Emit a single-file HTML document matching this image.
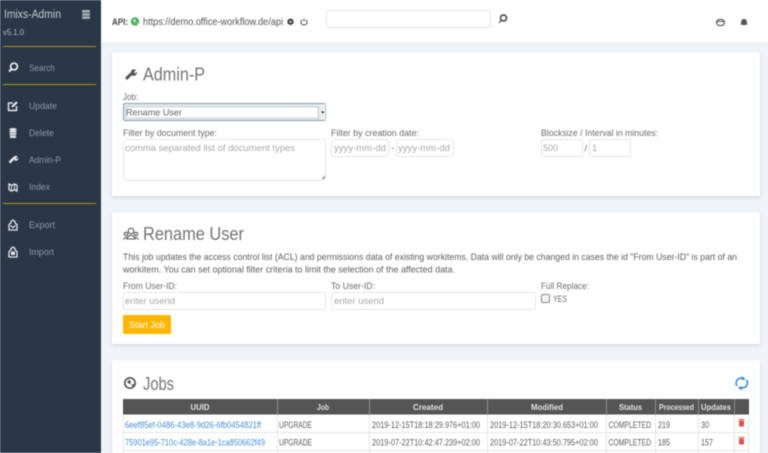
<!DOCTYPE html>
<html><head><meta charset="utf-8"><title>Imixs-Admin</title>
<style>
html,body{margin:0;padding:0;width:768px;height:453px;overflow:hidden;background:#f0f4f8}
svg{display:block;filter:blur(.45px)}
text{font-family:"Liberation Sans","DejaVu Sans",sans-serif;font-size:9.3px;fill:#5e5e5e}
.m{fill:#8f99a4;font-size:9.5px}
.l{fill:#6c6c6c}
.p{fill:#a8a8a8}
.h{fill:#747474;font-size:18.500px}
.th{fill:#e2e2e2;font-weight:bold;font-size:8.600px;text-anchor:middle}
.a{fill:#4a90d0}
.i{fill:#fff;stroke:#e4e6e8;stroke-width:1}
.c{fill:#fff}
.r text{font-size:8.900px}
</style></head><body>
<svg width="768" height="453" viewBox="0 0 768 453" xmlns="http://www.w3.org/2000/svg">
<defs><filter id="s" x="-5%" y="-5%" width="110%" height="115%"><feDropShadow dx="0" dy="1.500" stdDeviation="2" flood-color="#8a98a8" flood-opacity=".3"/></filter></defs>
<rect width="768" height="453" fill="#f0f4f8"/>
<!-- header -->
<rect x="101" width="667" height="43" fill="#fff"/><rect x="101" y="43" width="667" height="1" fill="#e2e7ec"/>
<!-- sidebar -->
<rect width="101" height="453" fill="#2a3747"/>
<text x="4" y="18" textLength="57" lengthAdjust="spacingAndGlyphs" style="font-size:11.500px;fill:#c6cbd1">Imixs-Admin</text>
<g fill="#aab1b9"><rect x="82" y="10" width="8" height="2.500" rx=".8"/><rect x="82" y="13.200" width="8" height="2.500" rx=".8"/><rect x="82" y="16.400" width="8" height="2.500" rx=".8"/></g>
<text x="3" y="35" textLength="21" lengthAdjust="spacingAndGlyphs" style="font-size:8.600px;fill:#b3bac2">v5.1.0</text>
<rect x="3" y="46" width="93" height="1" fill="#b8920f"/><rect x="3" y="84" width="93" height="1" fill="#b8920f"/><rect x="3" y="203" width="93" height="1" fill="#b8920f"/>
<text class="m" x="29" y="71" textLength="26" lengthAdjust="spacingAndGlyphs">Search</text>
<text class="m" x="29" y="109" textLength="28" lengthAdjust="spacingAndGlyphs">Update</text>
<text class="m" x="29" y="136" textLength="25" lengthAdjust="spacingAndGlyphs">Delete</text>
<text class="m" x="29" y="163" textLength="32" lengthAdjust="spacingAndGlyphs">Admin-P</text>
<text class="m" x="29" y="190" textLength="21" lengthAdjust="spacingAndGlyphs">Index</text>
<text class="m" x="29" y="228" textLength="26" lengthAdjust="spacingAndGlyphs">Export</text>
<text class="m" x="29" y="255" textLength="25" lengthAdjust="spacingAndGlyphs">Import</text>
<!-- sidebar icons -->
<g fill="none" stroke="#e4e7ea" stroke-width="1.500">
<circle cx="14" cy="66.500" r="3.400" stroke-width="1.800"/><path d="M11.500 69L9 71.500" stroke-width="2.200"/>
<path d="M16.500 106v4.500H8.500V103H13" stroke-width="1.400"/><path d="M12 107l5-5" stroke-width="2.200"/>
<path d="M9.500 131h7l-.6 7h-5.800z" fill="#e4e7ea" stroke="none"/><ellipse cx="13" cy="129.500" rx="3.800" ry="1.500" fill="#e4e7ea" stroke="none"/><path d="M10 133h6M10 135.500h6" stroke="#2a3747" stroke-width=".6"/>
<path d="M9.500 162.500l5-5" stroke-width="2.600"/><path d="M14 156.500a2.700 2.700 0 0 1 3.700 0l-1.700 1.500 1 1 1.600-1.300a3 3 0 0 1-3.800 3z" fill="#e4e7ea" stroke="none"/>
<path d="M9 184l2.500 1.300 3-1.300 2.500 1.300v5.700l-2.500-1.300-3 1.300L9 189.700z" stroke-width="1.300"/><path d="M11.500 185.500v5M14.500 184.500v5" stroke-width="1"/>
<path d="M9 230v-5.500l2-1.500v-1.500l2-1.500 2 1.500v1.500l2 1.500v5.500z" stroke-width="1.300"/><path d="M10.500 225.500l2.500 2 2.500-2" stroke-width="1.300"/>
<path d="M9 257v-5.500l2-1.500v-1.500l2-1.500 2 1.500v1.500l2 1.500v5.500z" stroke-width="1.300"/><rect x="11" y="251.500" width="4" height="3.500" fill="#e4e7ea" stroke="none"/>
</g>
<!-- top bar -->
<text x="112" y="25" textLength="16" lengthAdjust="spacingAndGlyphs" style="font-weight:bold;fill:#444">API:</text>
<circle cx="135" cy="21.500" r="4.200" fill="#4caf62"/><path d="M133 20l2-1 1 2-1.500 2zM136.500 23l1.500-1v2z" fill="#cfeed6"/>
<text x="143" y="25" textLength="140" lengthAdjust="spacingAndGlyphs" style="fill:#555;font-size:9.800px">https://demo.office-workflow.de/api</text>
<path d="M287.500 20l3-1.800 3 1.800v3.500l-3 1.800-3-1.800z" fill="#444"/><circle cx="290.500" cy="21.700" r="1" fill="#fff"/>
<path d="M302 19.800a3 3 0 1 0 4 0" fill="none" stroke="#555" stroke-width="1"/><path d="M304 18.500v3" stroke="#555" stroke-width="1"/>
<rect x="326.500" y="10.500" width="164" height="17" rx="2" class="i"/>
<circle cx="503.500" cy="18" r="3" fill="none" stroke="#555" stroke-width="1.700"/><path d="M501 20.500l-2 2.500" stroke="#777" stroke-width="1.600"/>
<ellipse cx="720.500" cy="22.500" rx="4" ry="3.200" fill="none" stroke="#555" stroke-width="1.200"/><path d="M716.500 21.500h8" stroke="#555"/>
<rect x="741" y="20.500" width="6" height="4.500" rx="1" fill="#555"/><rect x="742" y="19" width="4" height="2" fill="#666"/>
<!-- card 1 -->
<rect x="112" y="52" width="648" height="144" rx="2" class="c" filter="url(#s)"/>
<path d="M126 79l6-6" stroke="#555" stroke-width="3" fill="none"/><path d="M131 71a3.500 3.500 0 0 1 5-1l-2 2 1 1.500 2-1.500a3.500 3.500 0 0 1-5 3.500z" fill="#555"/>
<text class="h" x="143" y="80.500" textLength="62" lengthAdjust="spacingAndGlyphs">Admin-P</text>
<text class="l" x="123" y="100" textLength="15" lengthAdjust="spacingAndGlyphs">Job:</text>
<rect x="123.500" y="103.500" width="202" height="17" rx="1.500" fill="#dfe6ec" stroke="#8aa0b0"/>
<rect x="126" y="107" width="192" height="11" fill="#fff" stroke="#b6c2cc" stroke-width=".6"/>
<rect x="320" y="104" width="5.500" height="16" fill="#eee"/><path d="M321 111.500h3.500l-1.750 2z" fill="#222"/>
<text x="126" y="115.500" textLength="56" lengthAdjust="spacingAndGlyphs" style="fill:#666">Rename User</text>
<text class="l" x="123" y="136" textLength="94" lengthAdjust="spacingAndGlyphs">Filter by document type:</text>
<text class="l" x="331" y="136" textLength="88" lengthAdjust="spacingAndGlyphs">Filter by creation date:</text>
<text class="l" x="541" y="136" textLength="117" lengthAdjust="spacingAndGlyphs">Blocksize / Interval in minutes:</text>
<rect x="123.500" y="139.500" width="202" height="41" rx="2" class="i"/>
<text class="p" x="125" y="151" textLength="170" lengthAdjust="spacingAndGlyphs">comma separated list of document types</text>
<path d="M325 175v4h-4z" fill="#aaa"/>
<rect x="331.500" y="139.500" width="57" height="17" rx="2" class="i"/>
<text class="p" x="334" y="151" textLength="52" lengthAdjust="spacingAndGlyphs">yyyy-mm-dd</text>
<text x="391" y="151" style="fill:#777">-</text>
<rect x="396.500" y="139.500" width="57" height="17" rx="2" class="i"/>
<text class="p" x="398" y="151" textLength="52" lengthAdjust="spacingAndGlyphs">yyyy-mm-dd</text>
<rect x="541.500" y="139.500" width="41" height="17" rx="2" class="i"/>
<text class="p" x="543" y="151" textLength="15" lengthAdjust="spacingAndGlyphs">500</text>
<text x="584.500" y="151" style="fill:#777">/</text>
<rect x="589.500" y="139.500" width="41" height="17" rx="2" class="i"/>
<text class="p" x="592" y="151">1</text>
<!-- card 2 -->
<rect x="112" y="212" width="648" height="132" rx="2" class="c" filter="url(#s)"/>
<g fill="none" stroke="#555" stroke-width="1.100"><circle cx="131" cy="231" r="2.800"/><circle cx="126" cy="234" r="1.700"/><circle cx="136" cy="234" r="1.700"/><path d="M127 239a4 3.500 0 0 1 8 0z"/><path d="M123.500 239.500q2.500-3 4-1M138.500 239.500q-2.500-3-4-1"/></g>
<text class="h" x="143" y="240" textLength="101" lengthAdjust="spacingAndGlyphs">Rename User</text>
<text x="123" y="260" textLength="614" lengthAdjust="spacingAndGlyphs">This job updates the access control list (ACL) and permissions data of existing workitems. Data will only be changed in cases the id "From User-ID" is part of an</text>
<text x="123" y="272.500" textLength="332" lengthAdjust="spacingAndGlyphs">workitem. You can set optional filter criteria to limit the selection of the affected data.</text>
<text class="l" x="123" y="289" textLength="54" lengthAdjust="spacingAndGlyphs">From User-ID:</text>
<text class="l" x="331" y="289" textLength="44" lengthAdjust="spacingAndGlyphs">To User-ID:</text>
<text class="l" x="541" y="289" textLength="48" lengthAdjust="spacingAndGlyphs">Full Replace:</text>
<rect x="123.500" y="292.500" width="202" height="17" rx="2" class="i"/>
<text class="p" x="125" y="304" textLength="50" lengthAdjust="spacingAndGlyphs">enter userid</text>
<rect x="331.500" y="292.500" width="204" height="17" rx="2" class="i"/>
<text class="p" x="334" y="304" textLength="50" lengthAdjust="spacingAndGlyphs">enter userid</text>
<rect x="541.500" y="294.500" width="8" height="8" rx="1.500" fill="#f4f4f4" stroke="#888"/>
<text class="l" x="553" y="302" textLength="14" lengthAdjust="spacingAndGlyphs">YES</text>
<rect x="123" y="315" width="48" height="19" rx="1.500" fill="#ffb703"/>
<text x="129" y="328" textLength="36" lengthAdjust="spacingAndGlyphs" style="fill:#fff">Start Job</text>
<!-- card 3 -->
<rect x="112" y="360" width="648" height="110" rx="2" class="c" filter="url(#s)"/>
<circle cx="130" cy="383" r="5.200" fill="#fff" stroke="#555" stroke-width="1.700"/><path d="M127 382l2.500-2.500 1.500 2.500-1 2.500zM131 385l3-1.500-1 3z" fill="#555"/>
<text class="h" x="143" y="390" textLength="31" lengthAdjust="spacingAndGlyphs">Jobs</text>
<g fill="none" stroke="#3d8bd4" stroke-width="1.700"><path d="M737 386a5 5 0 0 1 6-7.500"/><path d="M746.500 380a5 5 0 0 1-6 7.500"/></g>
<path d="M742 376l3.500 3-3.500 1.500zM741.500 390.500l-3.500-3 3.500-1.500z" fill="#3d8bd4"/>
<!-- table -->
<rect x="123" y="399" width="626" height="15.500" fill="#555"/>
<g fill="#8c8c8c"><rect x="277" y="399" width="1" height="16"/><rect x="369" y="399" width="1" height="16"/><rect x="487" y="399" width="1" height="16"/><rect x="606" y="399" width="1" height="16"/><rect x="655" y="399" width="1" height="16"/><rect x="698" y="399" width="1" height="16"/><rect x="734" y="399" width="1" height="16"/></g>
<text class="th" x="200" y="410" textLength="19" lengthAdjust="spacingAndGlyphs">UUID</text>
<text class="th" x="323" y="410" textLength="12" lengthAdjust="spacingAndGlyphs">Job</text>
<text class="th" x="428" y="410" textLength="30" lengthAdjust="spacingAndGlyphs">Created</text>
<text class="th" x="547" y="410" textLength="32" lengthAdjust="spacingAndGlyphs">Modified</text>
<text class="th" x="630.500" y="410" textLength="23" lengthAdjust="spacingAndGlyphs">Status</text>
<text class="th" x="676.500" y="410" textLength="35" lengthAdjust="spacingAndGlyphs">Processed</text>
<text class="th" x="716" y="410" textLength="30" lengthAdjust="spacingAndGlyphs">Updates</text>
<g fill="#e6e6e6"><rect x="123" y="432" width="626" height="1"/><rect x="123" y="450" width="626" height="1"/><rect x="123" y="415" width="1" height="38"/><rect x="277" y="415" width="1" height="38"/><rect x="369" y="415" width="1" height="38"/><rect x="487" y="415" width="1" height="38"/><rect x="606" y="415" width="1" height="38"/><rect x="655" y="415" width="1" height="38"/><rect x="698" y="415" width="1" height="38"/><rect x="734" y="415" width="1" height="38"/><rect x="748" y="415" width="1" height="38"/></g>
<g class="r">
<text class="a" x="125" y="428" textLength="136" lengthAdjust="spacingAndGlyphs">6eef85ef-0486-43e8-9d26-6fb0454821ff</text>
<text x="279" y="428" textLength="33" lengthAdjust="spacingAndGlyphs">UPGRADE</text>
<text x="372" y="428" textLength="108" lengthAdjust="spacingAndGlyphs">2019-12-15T18:18:29.976+01:00</text>
<text x="490" y="428" textLength="108" lengthAdjust="spacingAndGlyphs">2019-12-15T18:20:30.653+01:00</text>
<text x="608.500" y="428" textLength="42.500" lengthAdjust="spacingAndGlyphs">COMPLETED</text>
<text x="658" y="428" textLength="12" lengthAdjust="spacingAndGlyphs">219</text>
<text x="701" y="428" textLength="8" lengthAdjust="spacingAndGlyphs">30</text>
<text class="a" x="125" y="445.500" textLength="140" lengthAdjust="spacingAndGlyphs">75901e95-710c-428e-8a1e-1ca850662f49</text>
<text x="279" y="445.500" textLength="33" lengthAdjust="spacingAndGlyphs">UPGRADE</text>
<text x="372" y="445.500" textLength="108" lengthAdjust="spacingAndGlyphs">2019-07-22T10:42:47.239+02:00</text>
<text x="490" y="445.500" textLength="108" lengthAdjust="spacingAndGlyphs">2019-07-22T10:43:50.795+02:00</text>
<text x="608.500" y="445.500" textLength="42.500" lengthAdjust="spacingAndGlyphs">COMPLETED</text>
<text x="658" y="445.500" textLength="12" lengthAdjust="spacingAndGlyphs">185</text>
<text x="701" y="445.500" textLength="12" lengthAdjust="spacingAndGlyphs">157</text>
</g>
<g fill="#d9534f"><rect x="739" y="420.500" width="5" height="6" rx=".8"/><rect x="738.500" y="419" width="6" height="1"/><rect x="739" y="438.500" width="5" height="6" rx=".8"/><rect x="738.500" y="437" width="6" height="1"/></g>
</svg>
</body></html>
